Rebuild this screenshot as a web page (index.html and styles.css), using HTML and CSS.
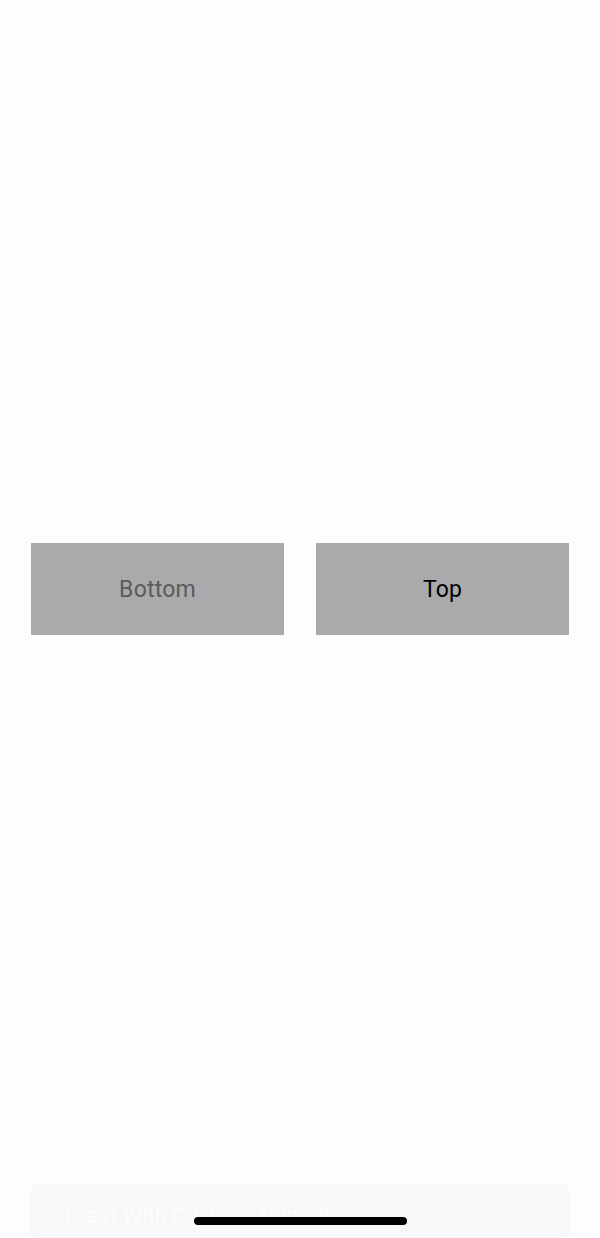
FILE: index.html
```html
<!DOCTYPE html>
<html>
<head>
<meta charset="utf-8">
<link rel="stylesheet" href="styles.css">
</head>
<body>
<div class="screen">
  <div class="buttons">
    <div class="btn btn-muted">Bottom</div>
    <div class="btn">Top</div>
  </div>
  <div class="toast">Toast With Custom Animation</div>
  <div class="home-indicator"></div>
</div>
</body>
</html>
```
FILE: styles.css
```css
html, body {
  margin: 0;
  padding: 0;
  background: #fdfcfe;
}
.screen {
  position: relative;
  width: 600px;
  height: 1238px;
  overflow: hidden;
  font-family: Roboto, "Noto Sans", sans-serif;
  display: flex;
  flex-direction: column;
}
.buttons {
  display: flex;
  gap: 32px;
  padding: 543px 31px 0 31px;
}
.btn {
  flex: 1;
  height: 92px;
  background: #aaa9ab;
  display: flex;
  align-items: center;
  justify-content: center;
  font-size: 23px;
  letter-spacing: 0.2px;
  color: #000;
}
.btn-muted {
  color: #5b5a5c;
}
.toast {
  margin: 549px 31px 0 31px;
  height: 80px;
  border-radius: 8px;
  background: #f9f7fa;
  color: #fdfdfe;
  font-size: 22px;
  padding: 19px 31px 0 31px;
  box-sizing: border-box;
}
.home-indicator {
  position: absolute;
  left: 194px;
  top: 1217px;
  width: 213px;
  height: 8px;
  border-radius: 4px;
  background: #000;
}
```
